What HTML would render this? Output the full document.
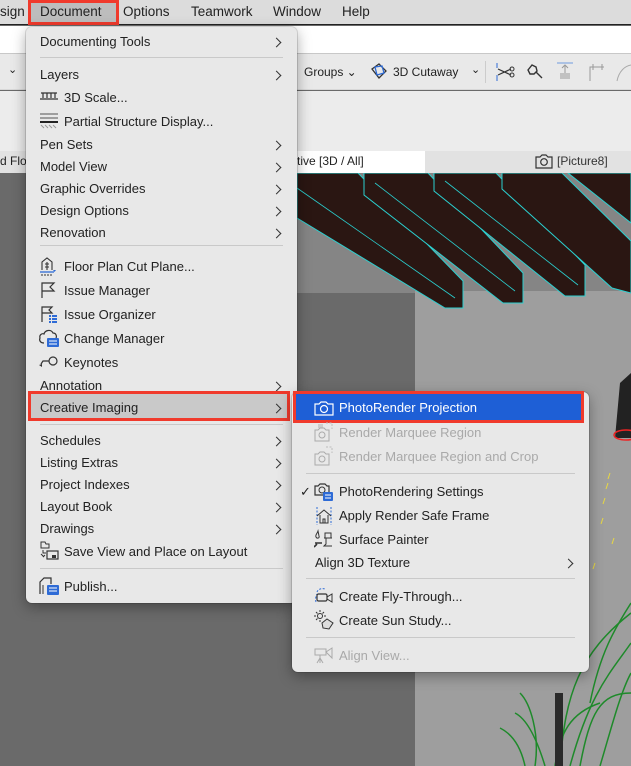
<!DOCTYPE html>
<html><head><meta charset="utf-8"><style>
*{margin:0;padding:0;box-sizing:border-box}
body{width:631px;height:766px;overflow:hidden;position:relative;font-family:"Liberation Sans",Arial,sans-serif;font-size:13px;color:#222;background:#6a6a6a}
.a{position:absolute;white-space:nowrap}
.menu{position:absolute;background:#e8e8e8;border-radius:6px;box-shadow:0 4px 14px rgba(0,0,0,.35),0 0 0 1px rgba(0,0,0,.12)}
.it{position:absolute;height:20px;line-height:20px;white-space:nowrap;font-size:13px;color:#222;margin-top:1px}
.chev{position:absolute;width:7px;height:7px;border-right:1.6px solid #333;border-top:1.6px solid #333;transform:rotate(45deg);margin-top:1px}
.sep{position:absolute;height:1px;background:#c9c9c9}
.dis{color:#a9a9a9}
svg.ic{position:absolute}
.mb{position:absolute;top:4px;font-size:13.5px;white-space:nowrap}
</style></head><body>
<!-- menubar -->
<div class="a" style="left:0;top:0;width:631px;height:25px;background:#dcdcdc;border-bottom:1px solid #222"></div>
<div class="mb" style="left:0">sign</div>
<div class="a" style="left:28px;top:0;width:91px;height:25px;border:3px solid #f03a2c;background:#bdbdbd"></div>
<div class="mb" style="left:40px">Document</div>
<div class="mb" style="left:123px">Options</div>
<div class="mb" style="left:191px">Teamwork</div>
<div class="mb" style="left:273px">Window</div>
<div class="mb" style="left:342px">Help</div>
<!-- toolbars -->
<div class="a" style="left:0;top:26px;width:631px;height:28px;background:#fff;border-bottom:1px solid #c8c8c8"></div>
<div class="a" style="left:0;top:54px;width:631px;height:36px;background:#e9e9e9;border-bottom:1px solid #d8d8d8"></div>
<div class="a" style="left:0;top:91px;width:631px;height:60px;background:#ececec"></div>
<div class="a" style="left:8px;top:63px;font-size:11px">&#8964;</div>
<div class="a" style="left:304px;top:65px;font-size:12px">Groups &#8964;</div>
<svg class="ic" style="left:369px;top:62px" width="20" height="18"><path d="M3 7 L10 2 L17 9 L10 16 Z" fill="none" stroke="#333" stroke-width="1.3"/><path d="M6 5 L13 4 L15 11 L8 13 Z" fill="none" stroke="#2e6bd6" stroke-width="1.3"/></svg>
<div class="a" style="left:393px;top:65px;font-size:12px">3D Cutaway</div>
<div class="a" style="left:471px;top:63px;font-size:11px">&#8964;</div>
<div class="a" style="left:485px;top:61px;width:1px;height:22px;background:#ccc"></div>
<svg class="ic" style="left:494px;top:61px" width="22" height="22"><path d="M3 2v5M3 14v6" stroke="#2e6bd6" stroke-width="1"/><path d="M4 8 L17 14 M4 14 L17 8" stroke="#333" stroke-width="1.2"/><circle cx="18" cy="8" r="2" fill="none" stroke="#333"/><circle cx="18" cy="14" r="2" fill="none" stroke="#333"/></svg>
<svg class="ic" style="left:525px;top:61px" width="22" height="22"><path d="M3 9 L7 4 L11 6 L12 10 L9 13 L5 13 Z M11 11 L17 17" fill="none" stroke="#333" stroke-width="1.4"/></svg>
<svg class="ic" style="left:555px;top:61px" width="22" height="22"><path d="M2 2h16" stroke="#6e9be0"/><path d="M10 4v14M7 7l3-3 3 3M6 12v6M8 12v6M12 12v6M14 12v6" stroke="#999" fill="none"/></svg>
<svg class="ic" style="left:587px;top:61px" width="22" height="22"><path d="M3 20V6h14M6 3v6M15 3v6" stroke="#999" fill="none"/></svg>
<svg class="ic" style="left:615px;top:61px" width="16" height="22"><path d="M2 20 C4 10 10 5 16 4" stroke="#aaa" fill="none"/></svg>
<!-- tab bar -->
<div class="a" style="left:0;top:151px;width:631px;height:22px;background:#e2e2e2"></div>
<div class="a" style="left:0;top:154px;font-size:12px">d Floo</div>
<div class="a" style="left:297px;top:151px;width:128px;height:22px;background:#fff"></div>
<div class="a" style="left:297px;top:154px;font-size:12px">tive [3D / All]</div>
<svg class="ic" style="left:535px;top:153px" width="18" height="16"><path d="M1 4h4l2-2h4l2 2h4v11H1Z" fill="none" stroke="#333" stroke-width="1.2"/><circle cx="9" cy="9" r="3.3" fill="none" stroke="#333" stroke-width="1.2"/></svg>
<div class="a" style="left:557px;top:154px;font-size:12px;color:#333">[Picture8]</div>
<!-- 3D view -->
<svg class="a" style="left:0;top:173px" width="631" height="593">
<rect x="0" y="0" width="631" height="593" fill="#6a6a6a"/>
<rect x="415" y="100" width="216" height="493" fill="#9e9e9e"/>
<polygon points="297,0 631,0 631,120 297,120" fill="#858585"/>
<rect x="415" y="118" width="216" height="20" fill="#9e9e9e"/>
<polygon points="297,0 358,0 463,108 463,135 445,135 297,45" fill="#2a1612" stroke="#2ad0d0" stroke-width="1"/>
<polygon points="364,0 428,0 523,100 523,130 503,130 364,22" fill="#2a1612" stroke="#2ad0d0" stroke-width="1"/>
<polygon points="434,0 496,0 585,92 585,123 565,123 434,18" fill="#2a1612" stroke="#2ad0d0" stroke-width="1"/>
<polygon points="502,0 562,0 631,68 631,120 612,115 502,16" fill="#2a1612" stroke="#2ad0d0" stroke-width="1"/>
<polygon points="568,0 631,0 631,50" fill="#2a1612" stroke="#2ad0d0" stroke-width="1"/>
<line x1="297" y1="15" x2="455" y2="125" stroke="#2ad0d0" stroke-width=".8"/>
<line x1="375" y1="10" x2="515" y2="118" stroke="#2ad0d0" stroke-width=".8"/>
<line x1="445" y1="8" x2="578" y2="112" stroke="#2ad0d0" stroke-width=".8"/>
<polygon points="620,210 631,200 631,265 615,265" fill="#222"/>
<ellipse cx="626" cy="262" rx="12" ry="5" fill="none" stroke="#e22" stroke-width="1.5"/>
<g stroke="#1e8a2a" stroke-width="1.5" fill="none">
<path d="M560 593 C565 520 580 480 631 440"/><path d="M570 593 C590 520 610 500 631 470"/><path d="M590 530 C600 480 615 455 631 430"/><path d="M545 593 C535 560 525 545 515 540"/><path d="M555 593 C560 560 570 540 600 530"/><path d="M535 593 C540 560 530 530 520 520"/><path d="M600 593 C610 560 620 520 631 500"/><path d="M580 593 C590 540 600 520 631 520"/><path d="M525 593 C520 570 510 560 500 555"/>
</g>
<rect x="555" y="520" width="8" height="73" fill="#2a2a2a"/>
<g stroke="#e8d840" stroke-width="1"><path d="M608 310l-2 6M605 325l-2 6M603 345l-2 6M614 365l-2 6M595 390l-2 6M610 300l-2 6"/></g>
</svg>
<!-- main menu -->
<div class="menu" style="left:26px;top:27px;width:271px;height:576px"></div>
<div class="it" style="left:40px;top:31px">Documenting Tools</div><div class="chev" style="left:273px;top:38px"></div>
<div class="sep" style="left:40px;top:57px;width:243px"></div>
<div class="it" style="left:40px;top:64px">Layers</div><div class="chev" style="left:273px;top:71px"></div>
<svg class="ic" style="left:39px;top:90px" width="20" height="14"><path d="M1 9h18M2 3h16M4 3v5M8 3v5M12 3v5M16 3v5" stroke="#333" stroke-width="1.2"/></svg>
<div class="it" style="left:64px;top:87px">3D Scale...</div>
<svg class="ic" style="left:39px;top:113px" width="20" height="16"><path d="M1 1h18M1 5h18" stroke="#555"/><path d="M1 9h18" stroke="#222" stroke-width="2"/><path d="M2 12l3 3M6 12l3 3M10 12l3 3M14 12l3 3" stroke="#999"/></svg>
<div class="it" style="left:64px;top:111px">Partial Structure Display...</div>
<div class="it" style="left:40px;top:134px">Pen Sets</div><div class="chev" style="left:273px;top:141px"></div>
<div class="it" style="left:40px;top:156px">Model View</div><div class="chev" style="left:273px;top:163px"></div>
<div class="it" style="left:40px;top:178px">Graphic Overrides</div><div class="chev" style="left:273px;top:185px"></div>
<div class="it" style="left:40px;top:200px">Design Options</div><div class="chev" style="left:273px;top:207px"></div>
<div class="it" style="left:40px;top:222px">Renovation</div><div class="chev" style="left:273px;top:229px"></div>
<div class="sep" style="left:40px;top:245px;width:243px"></div>
<svg class="ic" style="left:39px;top:256px" width="20" height="20"><path d="M3 14V6l5-4 5 4v8M6 8h4M6 11h4M8 6v8" fill="none" stroke="#333" stroke-width="1.1"/><path d="M1 16h14" stroke="#2e6bd6" stroke-width="1.3"/><path d="M14 14l3 0-1.5 2z" fill="#2e6bd6"/><path d="M3 18v2M6 18v2M9 18v2M12 18v2" stroke="#333"/></svg>
<div class="it" style="left:64px;top:256px">Floor Plan Cut Plane...</div>
<svg class="ic" style="left:40px;top:281px" width="18" height="18"><path d="M2 17V2h12l-4 4 4 4H2" fill="none" stroke="#333" stroke-width="1.2"/></svg>
<div class="it" style="left:64px;top:280px">Issue Manager</div>
<svg class="ic" style="left:40px;top:305px" width="18" height="18"><path d="M2 17V2h10l-3 3 3 3H2" fill="none" stroke="#333" stroke-width="1.2"/><path d="M9 10h2v2H9zM12 10h5v2h-5zM9 13h2v2H9zM12 13h5v2h-5zM9 16h2v2H9zM12 16h5v2h-5z" fill="#2e6bd6"/></svg>
<div class="it" style="left:64px;top:304px">Issue Organizer</div>
<svg class="ic" style="left:38px;top:328px" width="22" height="20"><path d="M6 15C2 15 1 12 2 10 1 7 4 5 6 6 7 2 13 1 15 5 18 5 19 8 18 10" fill="none" stroke="#333" stroke-width="1.2"/><rect x="9" y="10" width="12" height="9" rx="1" fill="#2e6bd6"/><path d="M11 13h8M11 16h8" stroke="#fff"/></svg>
<div class="it" style="left:64px;top:328px">Change Manager</div>
<svg class="ic" style="left:38px;top:354px" width="22" height="14"><circle cx="15" cy="7" r="4" fill="none" stroke="#333" stroke-width="1.2"/><path d="M11 7H5l-2 3" stroke="#333" fill="none" stroke-width="1.2"/><path d="M1 11l3-1 0 3z" fill="#333"/></svg>
<div class="it" style="left:64px;top:352px">Keynotes</div>
<div class="it" style="left:40px;top:375px">Annotation</div><div class="chev" style="left:273px;top:382px"></div>
<div class="a" style="left:28px;top:391px;width:262px;height:30px;border:3px solid #f03a2c;background:#c9c9c9"></div>
<div class="it" style="left:40px;top:397px">Creative Imaging</div><div class="chev" style="left:273px;top:404px"></div>
<div class="sep" style="left:40px;top:424px;width:243px"></div>
<div class="it" style="left:40px;top:430px">Schedules</div><div class="chev" style="left:273px;top:437px"></div>
<div class="it" style="left:40px;top:452px">Listing Extras</div><div class="chev" style="left:273px;top:459px"></div>
<div class="it" style="left:40px;top:474px">Project Indexes</div><div class="chev" style="left:273px;top:481px"></div>
<div class="it" style="left:40px;top:496px">Layout Book</div><div class="chev" style="left:273px;top:503px"></div>
<div class="it" style="left:40px;top:518px">Drawings</div><div class="chev" style="left:273px;top:525px"></div>
<svg class="ic" style="left:39px;top:541px" width="20" height="20"><path d="M2 1h4l1 2h3v4H2z" fill="none" stroke="#333"/><path d="M4 9v3h3M2 13l3 3M6 14l-2 2" stroke="#333" fill="none"/><rect x="8" y="10" width="11" height="8" fill="none" stroke="#333" stroke-width="1.2"/><rect x="13" y="14" width="4" height="3" fill="#333"/></svg>
<div class="it" style="left:64px;top:541px">Save View and Place on Layout</div>
<div class="sep" style="left:40px;top:568px;width:243px"></div>
<svg class="ic" style="left:38px;top:576px" width="22" height="20"><path d="M2 18V6l4-4h7v6" fill="none" stroke="#333" stroke-width="1.2"/><path d="M5 18V9" stroke="#333"/><rect x="9" y="9" width="12" height="10" rx="1" fill="#2e6bd6"/><path d="M11 12h8M11 15h8" stroke="#fff"/></svg>
<div class="it" style="left:64px;top:576px">Publish...</div>
<!-- submenu -->
<div class="menu" style="left:292px;top:392px;width:297px;height:280px"></div>
<div class="a" style="left:293px;top:391px;width:291px;height:32px;border:3px solid #f03a2c;background:#1e5fd6"></div>
<svg class="ic" style="left:314px;top:400px" width="20" height="16"><path d="M1 4h4l2-2h5l2 2h5v11H1Z" fill="none" stroke="#fff" stroke-width="1.2"/><circle cx="10" cy="9" r="3.5" fill="none" stroke="#fff" stroke-width="1.2"/></svg>
<div class="it" style="left:339px;top:397px;color:#fff">PhotoRender Projection</div>
<svg class="ic" style="left:314px;top:422px" width="20" height="20"><path d="M12 1h6v6" fill="none" stroke="#bbb" stroke-dasharray="2 1.5"/><rect x="4" y="2" width="5" height="4" fill="#ccc"/><path d="M1 8h3l2-2h4l2 2h3v11H1Z" fill="none" stroke="#aaa"/><circle cx="8" cy="13" r="3" fill="none" stroke="#aaa"/></svg>
<div class="it dis" style="left:339px;top:422px">Render Marquee Region</div>
<svg class="ic" style="left:314px;top:446px" width="20" height="20"><path d="M12 1h6v6" fill="none" stroke="#bbb" stroke-dasharray="2 1.5"/><path d="M1 8h3l2-2h4l2 2h3v11H1Z" fill="none" stroke="#aaa"/><circle cx="8" cy="13" r="3" fill="none" stroke="#aaa"/></svg>
<div class="it dis" style="left:339px;top:446px">Render Marquee Region and Crop</div>
<div class="sep" style="left:306px;top:473px;width:269px"></div>
<div class="it" style="left:300px;top:481px">✓</div>
<svg class="ic" style="left:314px;top:482px" width="20" height="20"><path d="M1 4h3l2-2h5l2 2h2v9H1Z" fill="none" stroke="#333" stroke-width="1.2"/><circle cx="8" cy="8" r="3" fill="none" stroke="#333"/><rect x="9" y="10" width="10" height="9" rx="1" fill="#2e6bd6"/><path d="M11 13h6M11 16h6" stroke="#fff"/></svg>
<div class="it" style="left:339px;top:481px">PhotoRendering Settings</div>
<svg class="ic" style="left:314px;top:506px" width="20" height="20"><path d="M3 1v18M17 1v18" stroke="#2e6bd6" stroke-dasharray="2 1.5"/><path d="M3 10l7-6 7 6M6 9v8h8V9M9 17v-4h2v4" fill="none" stroke="#333"/></svg>
<div class="it" style="left:339px;top:505px">Apply Render Safe Frame</div>
<svg class="ic" style="left:314px;top:529px" width="20" height="20"><path d="M4 2C3 5 1 6 2 8s4 1 3-1z" fill="none" stroke="#333"/><path d="M10 9h8M11 9V4h6v5M12 9v6l-2 2h8" fill="none" stroke="#333"/><path d="M1 14h7M0 18l3-3" stroke="#333" stroke-width="1.6"/></svg>
<div class="it" style="left:339px;top:529px">Surface Painter</div>
<div class="it" style="left:315px;top:552px">Align 3D Texture</div><div class="chev" style="left:565px;top:559px"></div>
<div class="sep" style="left:306px;top:578px;width:269px"></div>
<svg class="ic" style="left:314px;top:586px" width="20" height="20"><path d="M3 6C4 3 8 2 11 3M2 16c-1-3 0-6 1-8" fill="none" stroke="#2e6bd6" stroke-dasharray="2 1.5"/><rect x="3" y="8" width="10" height="7" rx="1.5" fill="none" stroke="#333" stroke-width="1.2"/><path d="M13 11l5-3v8l-5-3" fill="none" stroke="#333"/></svg>
<div class="it" style="left:339px;top:586px">Create Fly-Through...</div>
<svg class="ic" style="left:314px;top:610px" width="20" height="20"><circle cx="6" cy="6" r="2.5" fill="none" stroke="#333"/><path d="M6 0v2M6 10v2M0 6h2M10 6h2M2 2l1.5 1.5M10 2 8.5 3.5M2 10l1.5-1.5" stroke="#333"/><path d="M8 13l5-4 6 4-4 6-6-1z" fill="#ddd" stroke="#333"/></svg>
<div class="it" style="left:339px;top:610px">Create Sun Study...</div>
<div class="sep" style="left:306px;top:637px;width:269px"></div>
<svg class="ic" style="left:314px;top:646px" width="20" height="18"><rect x="1" y="3" width="11" height="6" fill="none" stroke="#aaa"/><path d="M6 9v8M3 17l3-5 3 5M12 6l6-4v10z" fill="none" stroke="#aaa"/></svg>
<div class="it dis" style="left:339px;top:645px">Align View...</div>
</body></html>
